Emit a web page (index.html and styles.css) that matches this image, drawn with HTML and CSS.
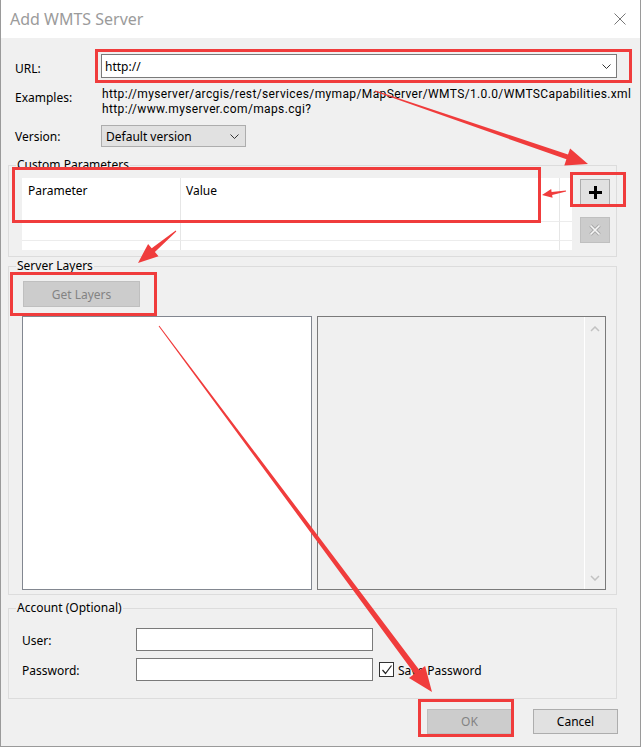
FILE: index.html
```html
<!DOCTYPE html>
<html lang="en">
<head>
    <meta charset="UTF-8">
    <title>Add WMTS Server</title>
    <link rel="stylesheet" href="styles.css">
</head>
<body>

    <div class="window">
        <div class="titlebar">
            <span class="title">Add WMTS Server</span>
            <svg class="close" width="12" height="12" viewBox="0 0 12 12">
                <path d="M0.5 0.5 L11.5 11.5 M11.5 0.5 L0.5 11.5" stroke="#777" stroke-width="1" fill="none"/>
            </svg>
        </div>

        <div class="row url-row">
            <span class="lbl url-lbl">URL:</span>
            <div class="combo url-combo">
                <span>http://</span>
                <svg width="9" height="5" viewBox="0 0 9 5"><path d="M0.5 0.5 L4.5 4.5 L8.5 0.5" stroke="#333" fill="none"/></svg>
            </div>
        </div>

        <div class="row examples-row">
            <span class="lbl ex-lbl">Examples:</span>
            <div class="examples">
                <div>http://myserver/arcgis/rest/services/mymap/MapServer/WMTS/1.0.0/WMTSCapabilities.xml</div>
                <div>http://www.myserver.com/maps.cgi?</div>
            </div>
        </div>

        <div class="row version-row">
            <span class="lbl">Version:</span>
            <div class="combo version-combo">
                <span>Default version</span>
                <svg width="9" height="5" viewBox="0 0 9 5"><path d="M0.5 0.5 L4.5 4.5 L8.5 0.5" stroke="#333" fill="none"/></svg>
            </div>
        </div>

        <div class="group params">
            <div class="legend">Custom Parameters</div>
            <div class="params-body">
                <div class="grid">
                    <div class="cell head">Parameter</div>
                    <div class="cell head">Value</div>
                    <div class="cell"></div>
                    <div class="cell line"></div>
                    <div class="cell line"></div>
                    <div class="cell line"></div>
                    <div class="cell line"></div>
                    <div class="cell line"></div>
                    <div class="cell line"></div>
                    <div class="cell"></div>
                    <div class="cell"></div>
                    <div class="cell"></div>
                </div>
                <div class="side-buttons">
                    <div class="btn icon-btn">
                        <svg width="13" height="13" viewBox="0 0 13 13">
                            <rect x="0" y="5" width="13" height="3" fill="#000"/>
                            <rect x="5" y="0" width="3" height="13" fill="#000"/>
                        </svg>
                    </div>
                    <div class="btn icon-btn disabled">
                        <svg width="14" height="14" viewBox="0 0 14 14">
                            <path d="M2.5 2.5 L11.5 11.5 M11.5 2.5 L2.5 11.5" stroke="#a9a9a9" stroke-width="3.5" fill="none"/>
                            <path d="M2.5 2.5 L11.5 11.5 M11.5 2.5 L2.5 11.5" stroke="#f6f6f6" stroke-width="1.6" fill="none"/>
                        </svg>
                    </div>
                </div>
            </div>
        </div>

        <div class="group layers">
            <div class="legend">Server Layers</div>
            <div class="layers-body">
                <div class="btn disabled get-layers">Get Layers</div>
                <div class="lists">
                    <div class="list left-list"></div>
                    <div class="list right-list">
                        <div class="scrollbar">
                            <svg width="10" height="6" viewBox="0 0 10 6"><path d="M1 5 L5 1 L9 5" stroke="#c2c2c2" stroke-width="1.5" fill="none"/></svg>
                            <svg width="10" height="6" viewBox="0 0 10 6"><path d="M1 1 L5 5 L9 1" stroke="#c2c2c2" stroke-width="1.5" fill="none"/></svg>
                        </div>
                    </div>
                </div>
            </div>
        </div>

        <div class="group account">
            <div class="legend">Account (Optional)</div>
            <div class="account-body">
                <div class="field">
                    <span class="field-lbl">User:</span>
                    <div class="textbox"></div>
                </div>
                <div class="field">
                    <span class="field-lbl">Password:</span>
                    <div class="textbox"></div>
                    <div class="checkbox">
                        <svg width="12" height="12" viewBox="0 0 12 12"><path d="M1.5 6 L4.5 9.5 L10.5 1.5" stroke="#222" stroke-width="1.2" fill="none"/></svg>
                    </div>
                    <span class="check-lbl">Save Password</span>
                </div>
            </div>
        </div>

        <div class="actions">
            <div class="btn disabled dlg-btn">OK</div>
            <div class="btn dlg-btn">Cancel</div>
        </div>
    </div>

    <!-- annotation marks drawn over the dialog -->
    <svg class="marks" width="641" height="747" viewBox="0 0 641 747">
        <g fill="none" stroke="#f03c3c" stroke-width="3">
            <rect x="96.5" y="50.5" width="534" height="31"/>
            <rect x="13.5" y="168.5" width="526" height="53"/>
            <rect x="571.5" y="173.5" width="53" height="32"/>
            <rect x="11.5" y="273.5" width="144" height="41"/>
            <rect x="419.5" y="700.5" width="93" height="35"/>
        </g>
        <g fill="#f03c3c">
            <polygon points="374.8,91.5 566.4,159.3 564.3,165.4 588,164 570.1,148.4 568,154.5 375.2,90.5"/>
            <polygon points="565.9,190.5 551.6,191.9 551.2,189 542,195 552.6,197.8 552.1,194.9 566.1,191.5"/>
            <polygon points="175.7,230.6 151.7,248.2 148.1,244 138,263 158.5,256.2 154.9,252 176.3,231.4"/>
            <polygon points="158.6,326.3 414.6,673.7 409,677.9 432,692 425.1,666 419.5,670.2 159.4,325.7"/>
        </g>
    </svg>

</body>
</html>
```

FILE: styles.css
```css
body {
    margin: 0;
    position: relative;
    font-family: "Noto Sans", "Open Sans", sans-serif;
    font-size: 12px;
    color: #000;
    background: #fff;
}

.window {
    width: 641px;
    height: 747px;
    box-sizing: border-box;
    border: 1px solid #9a9a9a;
    border-top: none;
    background: #f0f0f0;
    overflow: hidden;
}

/* Title bar */
.titlebar {
    height: 38px;
    background: #fff;
    display: flex;
    align-items: center;
    justify-content: space-between;
    padding: 0 14px 0 9px;
}
.title {
    font-size: 16px;
    color: #9b9b9b;
}

/* Form rows */
.row {
    display: flex;
    padding-left: 14px;
}
.lbl {
    width: 86px;
    flex: none;
}
.url-row {
    margin-top: 16px;
    align-items: center;
}
.url-lbl {
    padding-top: 4px;
}
.examples-row {
    margin-top: 9px;
    line-height: 15px;
}
.ex-lbl {
    padding-top: 3px;
}
.examples {
    padding-left: 1px;
    white-space: nowrap;
    font-family: Roboto, "Noto Sans", sans-serif;
    letter-spacing: 0.37px;
}
.version-row {
    margin-top: 8px;
    align-items: center;
}

.combo {
    box-sizing: border-box;
    display: flex;
    align-items: center;
    justify-content: space-between;
    border: 1px solid #7a7a7a;
    background: #fff;
    padding: 0 5px 0 3px;
}
.url-combo {
    width: 516px;
    height: 24px;
}
.version-combo {
    width: 145px;
    height: 22px;
    background: #e1e1e1;
    border-color: #adadad;
    padding: 0 6px 0 4px;
}

/* Group boxes */
.group {
    box-sizing: border-box;
    width: 609px;
    margin-left: 7px;
    border: 1px solid #dcdcdc;
}
.legend {
    display: table;
    margin: -10px 0 -7px 7px;
    padding: 0 1px;
    line-height: 17px;
    background: #f0f0f0;
}

.params {
    margin-top: 18px;
    height: 92px;
}
.params-body {
    display: flex;
    gap: 8px;
    padding: 12px 6px 0 13px;
}
.grid {
    width: 550px;
    height: 72px;
    background: #fff;
    display: grid;
    grid-template-columns: 159px 379px 12px;
    grid-template-rows: 24px 20px 19px 9px;
}
.cell {
    box-sizing: border-box;
    border-right: 1px solid #e6e6e6;
}
.cell:nth-child(3n) {
    border-right: none;
}
.cell.line {
    border-bottom: 1px solid #ececec;
}
.cell.line:nth-child(3n) {
    border-right: none;
}
.head {
    display: flex;
    align-items: center;
    padding-left: 6px;
}
.head:nth-child(2) {
    padding-left: 5px;
}
.side-buttons {
    display: flex;
    flex-direction: column;
    gap: 12px;
    margin-top: 1px;
}

/* Buttons */
.btn {
    box-sizing: border-box;
    display: flex;
    align-items: center;
    justify-content: center;
    background: #e1e1e1;
    border: 1px solid #adadad;
}
.btn.disabled {
    background: #cccccc;
    border-color: #bfbfbf;
    color: #838383;
}
.icon-btn {
    width: 30px;
    height: 26px;
}

/* Server layers */
.layers {
    margin-top: 9px;
    height: 329px;
}
.layers-body {
    padding: 14px 0 0 13px;
}
.get-layers {
    width: 117px;
    height: 26px;
    margin-left: 1px;
}
.lists {
    display: flex;
    gap: 5px;
    margin-top: 9px;
}
.list {
    box-sizing: border-box;
    height: 274px;
}
.left-list {
    width: 290px;
    background: #fff;
    border: 1px solid #828790;
}
.right-list {
    width: 289px;
    border: 1px solid #7a7a7a;
    display: flex;
    justify-content: flex-end;
}
.scrollbar {
    box-sizing: border-box;
    width: 21px;
    border-left: 1px solid #fff;
    display: flex;
    flex-direction: column;
    justify-content: space-between;
    align-items: center;
    padding: 9px 0 8px;
}

/* Account */
.account {
    margin-top: 13px;
    height: 91px;
}
.account-body {
    display: flex;
    flex-direction: column;
    gap: 7px;
    padding: 19px 0 0 13px;
}
.field {
    display: flex;
    align-items: center;
}
.field-lbl {
    width: 114px;
    padding-top: 2px;
}
.textbox {
    box-sizing: border-box;
    width: 237px;
    height: 23px;
    background: #fff;
    border: 1px solid #7a7a7a;
}
.checkbox {
    box-sizing: border-box;
    width: 15px;
    height: 15px;
    margin-left: 6px;
    border: 1px solid #333;
    background: #fff;
    display: flex;
    align-items: center;
    justify-content: center;
}
.check-lbl {
    margin-left: 4px;
    padding-top: 2px;
}

/* Dialog buttons */
.actions {
    display: flex;
    justify-content: flex-end;
    gap: 21px;
    margin-top: 10px;
    padding-right: 22px;
}
.dlg-btn {
    width: 85px;
    height: 25px;
}

.marks {
    position: absolute;
    top: 0;
    left: 0;
    pointer-events: none;
}
```
